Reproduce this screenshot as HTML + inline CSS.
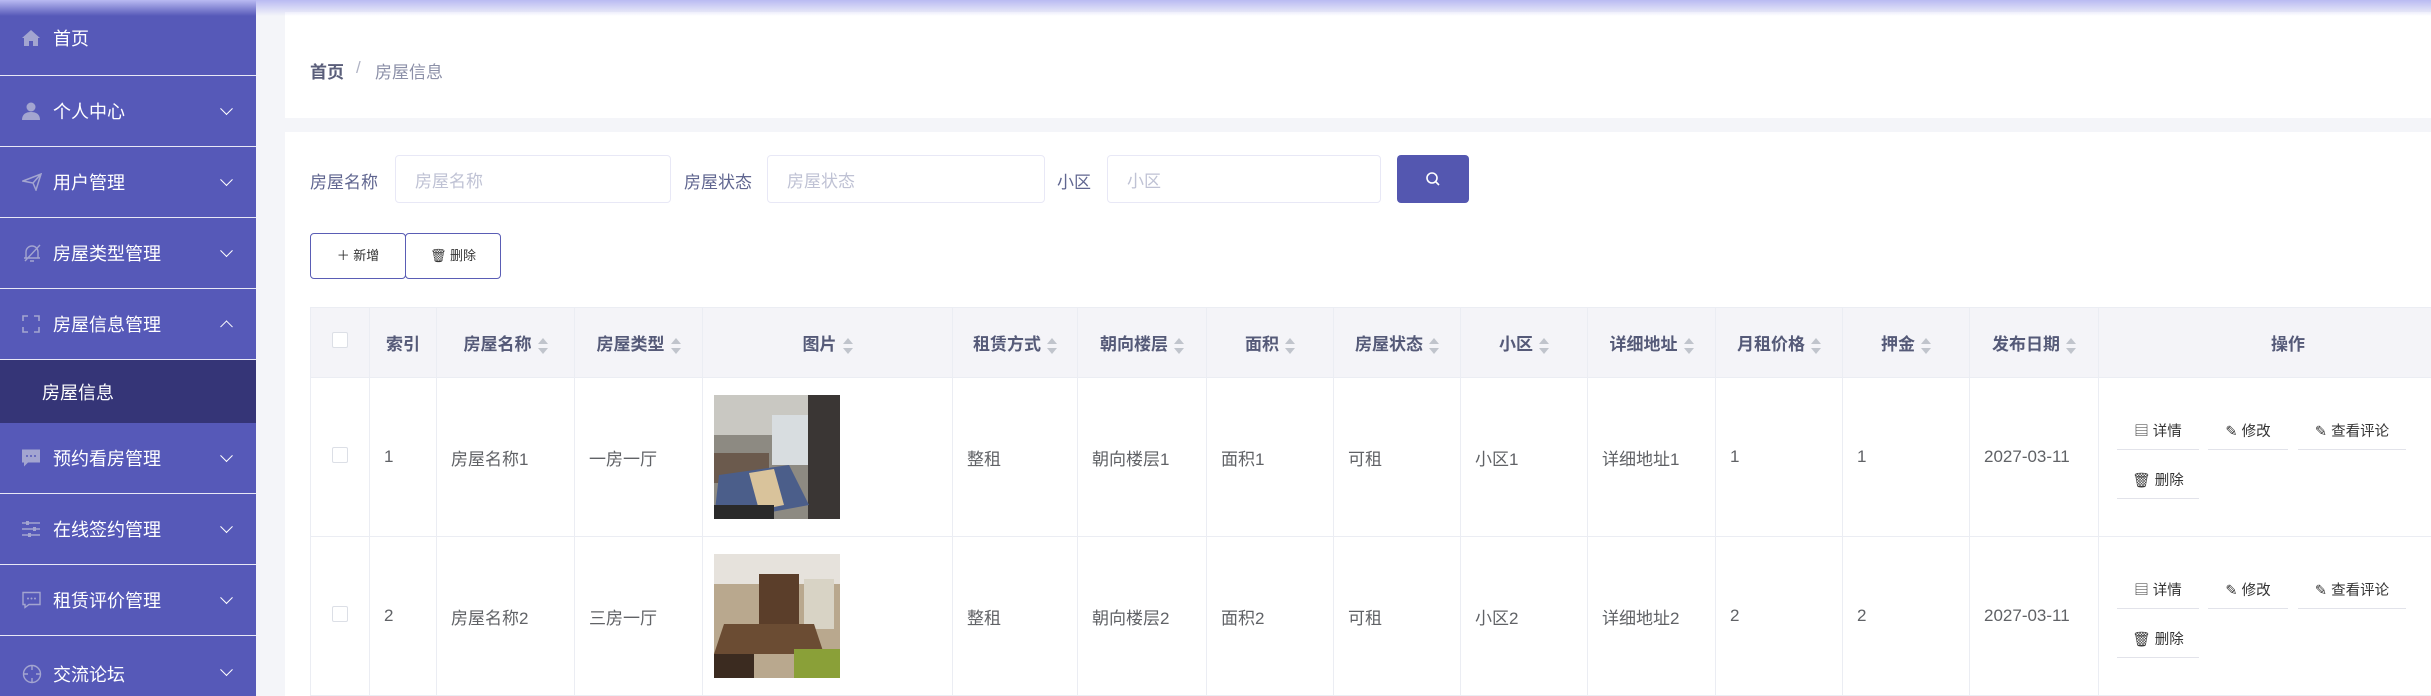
<!DOCTYPE html>
<html><head><meta charset="utf-8"><style>
*{box-sizing:border-box;margin:0;padding:0}
body{width:2431px;height:696px;overflow:hidden;background:#f4f5f9;font-family:"Liberation Sans","Noto Sans CJK SC",sans-serif;position:relative}
.topbar{position:absolute;left:0;top:0;width:2431px;height:16px;background:linear-gradient(#b9baf2,rgba(244,245,249,0));z-index:3}
.side{position:absolute;left:0;top:0;width:256px;height:696px;background:#5659b8}
.it{position:absolute;left:0;width:256px;height:71px;border-bottom:1.5px solid #e8e8f6;color:#fff;font-size:18px}
.it .t{position:absolute;left:53px;top:50%;transform:translateY(-50%)}
.it svg.ic{position:absolute;left:22px;top:50%;transform:translateY(-50%)}
.it .ch{position:absolute;left:222px;top:50%;width:9px;height:9px;border-right:1.6px solid #fff;border-bottom:1.6px solid #fff;transform:translateY(-75%) rotate(45deg)}
.it .ch.up{transform:translateY(-20%) rotate(-135deg)}
.sub{background:#353577;border-bottom:none}
.card{position:absolute;background:#fff}
.bc{left:285px;top:12px;width:2146px;height:106px}
.bc span{position:absolute;top:46px;font-size:17px}
.sc{left:285px;top:132px;width:2146px;height:564px}
.lbl{position:absolute;top:168px;font-size:17px;color:#606690}
.inp{position:absolute;top:155px;height:48px;border:1.5px solid #e8e8f6;border-radius:4px;color:#bfc2d4;font-size:17px;padding:11px 0 0 19px}
.btn{position:absolute;top:233px;height:46px;border:1.5px solid #5a5db5;border-radius:4px;background:#fff;font-size:13px;color:#333;text-align:center;line-height:43px}
table{position:absolute;left:310px;top:307px;border-collapse:collapse;table-layout:fixed;width:2180px}
td,th{border:1.5px solid #ebedf3;font-size:17px;color:#606266;text-align:left;padding-left:14px;font-weight:normal}
th{height:70px;background:#f4f4f8;color:#555a78;font-weight:bold;text-align:center;padding:0}
td{height:158px}
.so{display:inline-block;vertical-align:middle;margin-left:6px;width:10px;height:16px;position:relative}
.so:before,.so:after{content:"";position:absolute;left:0;border-left:5px solid transparent;border-right:5px solid transparent}
.so:before{top:0;border-bottom:6px solid #c0c4cc}
.so:after{bottom:0;border-top:6px solid #c0c4cc}
.cb{display:inline-block;width:16px;height:16px;border:1.5px solid #dcdfe6;border-radius:2px;background:#fff}
.ops{position:relative;height:158px}
.op{position:absolute;height:35px;border-bottom:1.5px solid #e2e3ea;font-size:14.5px;color:#333;text-align:center;line-height:34px;white-space:nowrap}
.img{width:126px;height:124px;display:block}
</style></head><body>
<div class="topbar"></div>
<div class="side">
 <div class="it" style="top:0;height:76px"><svg class="ic" width="18" height="16" viewBox="0 0 18 16"><path d="M9 0L0 8h2v8h5v-5h4v5h5V8h2z" fill="#a3a5d0"/></svg><span class="t">首页</span></div>
 <div class="it" style="top:76px"><svg class="ic" width="18" height="18" viewBox="0 0 18 18"><circle cx="9" cy="5" r="4.5" fill="#a3a5d0"/><path d="M0 18c0-6 4-8 9-8s9 2 9 8z" fill="#a3a5d0"/></svg><span class="t">个人中心</span><i class="ch"></i></div>
 <div class="it" style="top:147px"><svg class="ic" width="20" height="18" viewBox="0 0 20 18"><path d="M1 8L19 1 14 17 11 10z M11 10L19 1" fill="none" stroke="#a3a5d0" stroke-width="1.5"/></svg><span class="t">用户管理</span><i class="ch"></i></div>
 <div class="it" style="top:218px"><svg class="ic" width="20" height="20" viewBox="0 0 20 20"><path d="M4 15V9a6 6 0 0112 0v6H2h16M8 18h4M3 18L18 2" fill="none" stroke="#a3a5d0" stroke-width="1.4"/></svg><span class="t">房屋类型管理</span><i class="ch"></i></div>
 <div class="it" style="top:289px"><svg class="ic" width="18" height="18" viewBox="0 0 18 18"><path d="M1 6V1h5M12 1h5v5M17 12v5h-5M6 17H1v-5" fill="none" stroke="#a3a5d0" stroke-width="1.6"/></svg><span class="t">房屋信息管理</span><i class="ch up"></i></div>
 <div class="it sub" style="top:360px;height:63px"><span class="t" style="left:42px">房屋信息</span></div>
 <div class="it" style="top:423px"><svg class="ic" width="18" height="17" viewBox="0 0 18 17"><path d="M0 0h18v13H6l-4 4v-4H0z" fill="#a3a5d0"/><circle cx="5" cy="6.5" r="1" fill="#5659b8"/><circle cx="9" cy="6.5" r="1" fill="#5659b8"/><circle cx="13" cy="6.5" r="1" fill="#5659b8"/></svg><span class="t">预约看房管理</span><i class="ch"></i></div>
 <div class="it" style="top:494px"><svg class="ic" width="18" height="16" viewBox="0 0 18 16"><path d="M0 2h18M0 8h18M0 14h18" stroke="#a3a5d0" stroke-width="1.4"/><rect x="4" y="0" width="3" height="4" fill="#a3a5d0"/><rect x="11" y="6" width="3" height="4" fill="#a3a5d0"/><rect x="6" y="12" width="3" height="4" fill="#a3a5d0"/></svg><span class="t">在线签约管理</span><i class="ch"></i></div>
 <div class="it" style="top:565px"><svg class="ic" width="19" height="17" viewBox="0 0 19 17"><path d="M1 1h17v12H7l-4 3v-3H1z" fill="none" stroke="#a3a5d0" stroke-width="1.4"/><circle cx="6" cy="7" r="1" fill="#a3a5d0"/><circle cx="9.5" cy="7" r="1" fill="#a3a5d0"/><circle cx="13" cy="7" r="1" fill="#a3a5d0"/></svg><span class="t">租赁评价管理</span><i class="ch"></i></div>
 <div class="it" style="top:636px;height:60px;border:none"><svg class="ic" width="20" height="20" viewBox="0 0 20 20" style="top:38px"><circle cx="10" cy="10" r="8.5" fill="none" stroke="#a3a5d0" stroke-width="1.4"/><path d="M10 1v5M10 14v5M1 10h5M14 10h5" stroke="#a3a5d0" stroke-width="1.4"/></svg><span class="t" style="top:38px">交流论坛</span><i class="ch" style="top:36px"></i></div>
</div>

<div class="card bc"><span style="left:25px;font-weight:bold;color:#5a5e7a">首页</span><span style="left:71px;color:#b0b3c4">/</span><span style="left:90px;color:#8c90a8">房屋信息</span></div>
<div class="card sc"></div>
<span class="lbl" style="left:310px">房屋名称</span>
<div class="inp" style="left:395px;width:276px">房屋名称</div>
<span class="lbl" style="left:684px">房屋状态</span>
<div class="inp" style="left:767px;width:278px">房屋状态</div>
<span class="lbl" style="left:1057px">小区</span>
<div class="inp" style="left:1107px;width:274px">小区</div>
<div style="position:absolute;left:1397px;top:155px;width:72px;height:48px;background:#5457b0;border-radius:4px"><svg width="16" height="16" viewBox="0 0 16 16" style="position:absolute;left:28px;top:16px"><circle cx="7" cy="7" r="5" fill="none" stroke="#fff" stroke-width="1.6"/><path d="M11 11l3 3" stroke="#fff" stroke-width="1.6"/></svg></div>
<div class="btn" style="left:310px;width:96px">＋ 新增</div>
<div class="btn" style="left:405px;width:96px">🗑 删除</div>

<table>
<colgroup><col style="width:59px"><col style="width:67px"><col style="width:138px"><col style="width:128px"><col style="width:250px"><col style="width:125px"><col style="width:129px"><col style="width:127px"><col style="width:127px"><col style="width:127px"><col style="width:128px"><col style="width:127px"><col style="width:127px"><col style="width:129px"><col style="width:392px"></colgroup>
<tr><th><span class="cb"></span></th><th>索引</th><th>房屋名称<i class="so"></i></th><th>房屋类型<i class="so"></i></th><th>图片<i class="so"></i></th><th>租赁方式<i class="so"></i></th><th>朝向楼层<i class="so"></i></th><th>面积<i class="so"></i></th><th>房屋状态<i class="so"></i></th><th>小区<i class="so"></i></th><th>详细地址<i class="so"></i></th><th>月租价格<i class="so"></i></th><th>押金<i class="so"></i></th><th>发布日期<i class="so"></i></th><th style="text-align:left;padding-left:172px">操作</th></tr>
<tr><td style="text-align:center;padding:0"><span class="cb"></span></td><td>1</td><td>房屋名称1</td><td>一房一厅</td><td style="padding-left:11px"><svg class="img" viewBox="0 0 126 124"><rect width="126" height="124" fill="#8d8a82"/><rect x="0" y="0" width="126" height="40" fill="#c9c8c2"/><rect x="58" y="20" width="36" height="50" fill="#d8dde0"/><rect x="94" y="0" width="32" height="124" fill="#3a3634"/><rect x="0" y="58" width="55" height="30" fill="#6b5a4d"/><path d="M5 80L75 70 95 110 20 124 0 124z" fill="#4b5e8a"/><path d="M35 78L60 74 70 110 45 115z" fill="#d9c39b"/><rect x="0" y="110" width="60" height="14" fill="#2a2a2a"/></svg></td><td>整租</td><td>朝向楼层1</td><td>面积1</td><td>可租</td><td>小区1</td><td>详细地址1</td><td>1</td><td>1</td><td>2027-03-11</td><td style="padding:0"><div class="ops"><div class="op" style="left:18px;top:37px;width:82px">▤ 详情</div><div class="op" style="left:109px;top:37px;width:80px">✎ 修改</div><div class="op" style="left:199px;top:37px;width:108px">✎ 查看评论</div><div class="op" style="left:18px;top:86px;width:82px">🗑 删除</div></div></td></tr>
<tr><td style="text-align:center;padding:0"><span class="cb"></span></td><td>2</td><td>房屋名称2</td><td>三房一厅</td><td style="padding-left:11px"><svg class="img" viewBox="0 0 126 124"><rect width="126" height="124" fill="#b9a88e"/><rect x="0" y="0" width="126" height="30" fill="#e6e2dc"/><rect x="45" y="20" width="40" height="60" fill="#5b3e2a"/><rect x="90" y="25" width="30" height="50" fill="#d8d3c5"/><path d="M10 70h90l10 30H0z" fill="#6b4c33"/><rect x="80" y="95" width="46" height="29" fill="#8aa038"/><rect x="0" y="100" width="40" height="24" fill="#3b2b20"/></svg></td><td>整租</td><td>朝向楼层2</td><td>面积2</td><td>可租</td><td>小区2</td><td>详细地址2</td><td>2</td><td>2</td><td>2027-03-11</td><td style="padding:0"><div class="ops"><div class="op" style="left:18px;top:37px;width:82px">▤ 详情</div><div class="op" style="left:109px;top:37px;width:80px">✎ 修改</div><div class="op" style="left:199px;top:37px;width:108px">✎ 查看评论</div><div class="op" style="left:18px;top:86px;width:82px">🗑 删除</div></div></td></tr>
</table>
</body></html>
